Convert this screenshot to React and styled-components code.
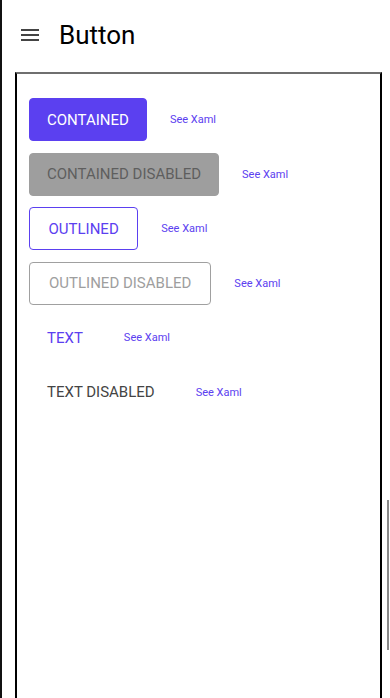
import styled, { createGlobalStyle } from "styled-components";

const GlobalStyle = createGlobalStyle`
  html, body {
    margin: 0;
    padding: 0;
    background: #fff;
    font-family: Roboto, "Noto Sans", sans-serif;
  }
`;

const PURPLE = "#5b40f0";

const rows = [
  { label: "Contained", kind: "contained" },
  { label: "Contained Disabled", kind: "containedDisabled" },
  { label: "Outlined", kind: "outlined" },
  { label: "Outlined Disabled", kind: "outlinedDisabled" },
  { label: "Text", kind: "text" },
  { label: "Text Disabled", kind: "textDisabled" },
];

const looks = {
  contained: `background: ${PURPLE}; color: #fff; border-color: ${PURPLE};`,
  containedDisabled: `background: #9e9e9e; color: #5e5e5e; border-color: #9e9e9e;`,
  outlined: `background: #fff; color: ${PURPLE}; border-color: ${PURPLE}; padding: 0 18.5px;`,
  outlinedDisabled: `background: #fff; color: #9e9e9e; border-color: #a0a0a0; padding: 0 19px;`,
  text: `background: transparent; color: ${PURPLE}; border-color: transparent;`,
  textDisabled: `background: transparent; color: #444; border-color: transparent;`,
};

function App() {
  return (
    <Screen>
      <GlobalStyle />
      <Header>
        <MenuIcon viewBox="0 0 18 12">
          <rect x="0" y="0" width="18" height="2" fill="#444" />
          <rect x="0" y="5" width="18" height="2" fill="#444" />
          <rect x="0" y="10" width="18" height="2" fill="#444" />
        </MenuIcon>
        <Title>Button</Title>
      </Header>
      <Panel>
        {rows.map((r) => (
          <Row key={r.kind}>
            <MatButton $kind={r.kind}>{r.label}</MatButton>
            <XamlLink>See Xaml</XamlLink>
          </Row>
        ))}
      </Panel>
      <Scrollbar />
    </Screen>
  );
}

const Screen = styled.div`
  position: relative;
  width: 390px;
  height: 698px;
  overflow: hidden;
  border-left: 2px solid #111;
  box-sizing: border-box;
`;

const Header = styled.header`
  display: flex;
  align-items: center;
  height: 72px;
  padding-left: 19px;
  box-sizing: border-box;
`;

const MenuIcon = styled.svg`
  width: 18px;
  height: 12px;
  margin-right: 20px;
  margin-top: -2px;
`;

const Title = styled.h1`
  margin: 0 0 3px 0;
  font-size: 26px;
  font-weight: 400;
  color: #000;
`;

const Panel = styled.main`
  margin-left: 13px;
  width: 367px;
  height: 640px;
  box-sizing: border-box;
  border: 2px solid #000;
  border-top: 2px solid #6f6f6f;
  padding: 24px 0 0 12px;
  display: flex;
  flex-direction: column;
  gap: 11.5px;
`;

const Row = styled.div`
  display: flex;
  align-items: center;
  gap: 23px;
`;

const MatButton = styled.button`
  height: 43px;
  padding: 0 17px;
  border: 1px solid;
  border-radius: 4px;
  font-family: Roboto, sans-serif;
  font-size: 15px;
  text-transform: uppercase;
  letter-spacing: 0;
  ${(p) => looks[p.$kind]}
`;

const XamlLink = styled.span`
  font-size: 11px;
  color: ${PURPLE};
`;

const Scrollbar = styled.div`
  position: absolute;
  right: 1px;
  top: 500px;
  width: 2px;
  height: 150px;
  background: #8a8a8a;
`;

export default App;
